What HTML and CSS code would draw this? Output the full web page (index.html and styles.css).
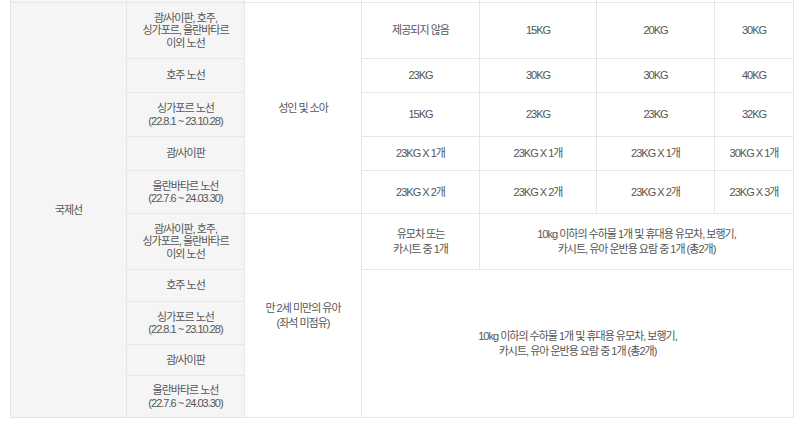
FILE: index.html
```html
<!DOCTYPE html>
<html lang="ko">
<head>
<meta charset="utf-8">
<title>수하물 안내</title>
<link rel="stylesheet" href="styles.css">
</head>
<body>
<div class="wrap">
<table class="bag">
  <colgroup>
    <col class="c1"><col class="c2"><col class="c3"><col class="c4"><col class="c5"><col class="c6"><col class="c7">
  </colgroup>
  <tbody>
    <tr class="prev">
      <td class="hd"></td><td class="hd"></td><td></td><td></td><td></td><td></td><td></td>
    </tr>
    <tr class="h56">
      <td class="hd" rowspan="10">국제선</td>
      <td class="hd route">괌/사이판, 호주,<br>싱가포르, 울란바타르<br>이외 노선</td>
      <td rowspan="5">성인 및 소아</td>
      <td>제공되지 않음</td><td>15KG</td><td>20KG</td><td>30KG</td>
    </tr>
    <tr class="h34">
      <td class="hd route">호주 노선</td>
      <td>23KG</td><td>30KG</td><td>30KG</td><td>40KG</td>
    </tr>
    <tr class="h44">
      <td class="hd route">싱가포르 노선<br>(22.8.1 ~ 23.10.28)</td>
      <td>15KG</td><td>23KG</td><td>23KG</td><td>32KG</td>
    </tr>
    <tr class="h34">
      <td class="hd route">괌/사이판</td>
      <td>23KG X 1개</td><td>23KG X 1개</td><td>23KG X 1개</td><td>30KG X 1개</td>
    </tr>
    <tr class="h43">
      <td class="hd route">울란바타르 노선<br>(22.7.6 ~ 24.03.30)</td>
      <td>23KG X 2개</td><td>23KG X 2개</td><td>23KG X 2개</td><td>23KG X 3개</td>
    </tr>
    <tr class="h56">
      <td class="hd route">괌/사이판, 호주,<br>싱가포르, 울란바타르<br>이외 노선</td>
      <td rowspan="5">만 2세 미만의 유아<br>(좌석 미점유)</td>
      <td>유모차 또는<br>카시트 중 1개</td>
      <td colspan="3">10kg 이하의 수하물 1개 및 휴대용 유모차, 보행기,<br>카시트, 유아 운반용 요람 중 1개 (총2개)</td>
    </tr>
    <tr class="h32">
      <td class="hd route">호주 노선</td>
      <td colspan="4" rowspan="4">10kg 이하의 수하물 1개 및 휴대용 유모차, 보행기,<br>카시트, 유아 운반용 요람 중 1개 (총2개)</td>
    </tr>
    <tr class="h43">
      <td class="hd route">싱가포르 노선<br>(22.8.1 ~ 23.10.28)</td>
    </tr>
    <tr class="h31">
      <td class="hd route">괌/사이판</td>
    </tr>
    <tr class="h42">
      <td class="hd route">울란바타르 노선<br>(22.7.6 ~ 24.03.30)</td>
    </tr>
  </tbody>
</table>
</div>
</body>
</html>
```

FILE: styles.css
```css
html, body {
  margin: 0;
  padding: 0;
  background: #ffffff;
}

.wrap {
  padding: 0 0 0 10px;
}

.bag {
  border-collapse: collapse;
  table-layout: fixed;
  width: 783px;
  font-family: "Liberation Sans", "Noto Sans CJK KR", sans-serif;
  font-size: 11px;
  letter-spacing: -1px;
  color: #555555;
}

.c1 { width: 116px; }
.c2 { width: 118px; }
.c3 { width: 117px; }
.c4 { width: 118px; }
.c5 { width: 117px; }
.c6 { width: 118px; }
.c7 { width: 79px; }

.bag td {
  border: 1px solid #e6e6e6;
  padding: 0 4px;
  text-align: center;
  vertical-align: middle;
  line-height: 15px;
  background: #ffffff;
}

.bag td.hd {
  background: #f5f5f5;
}

.bag td.route {
  line-height: 12.5px;
}

.prev td {
  border-top: none;
  padding: 0;
  height: 2px;
  line-height: 0;
  font-size: 0;
}

.h56 { height: 56px; }
.h44 { height: 44px; }
.h43 { height: 43px; }
.h42 { height: 42px; }
.h34 { height: 34px; }
.h32 { height: 32px; }
.h31 { height: 31px; }
```
